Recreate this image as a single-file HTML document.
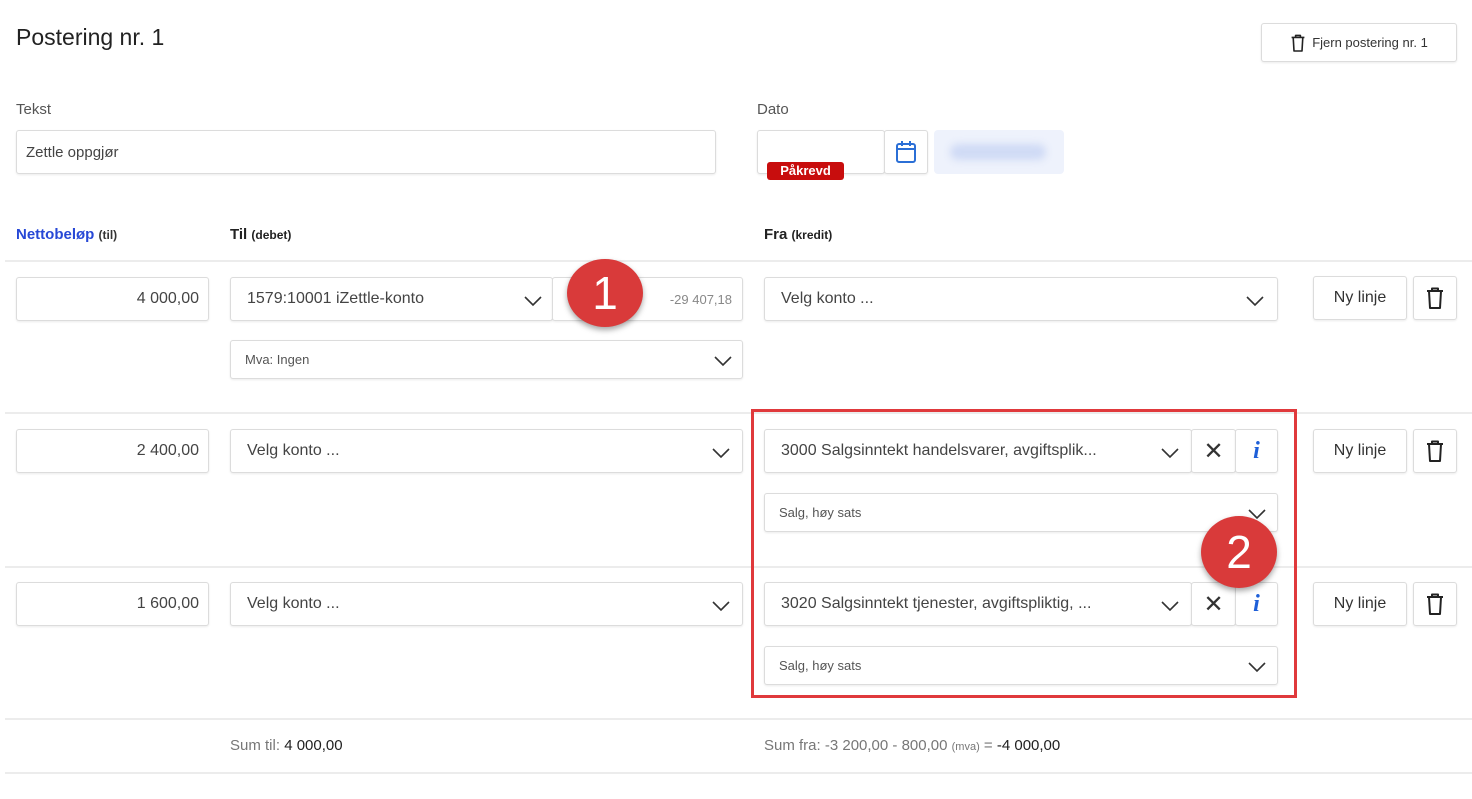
<!DOCTYPE html>
<html><head><meta charset="utf-8"><style>
*{box-sizing:border-box;margin:0;padding:0}
body{width:1472px;height:799px;background:#fff;font-family:"Liberation Sans",sans-serif;color:#333;position:relative;overflow:hidden}
.a{position:absolute}
.box{position:absolute;border:1px solid #dcdcdc;border-radius:3px;background:#fff;box-shadow:0 1px 2px rgba(0,0,0,.08)}
.t{position:absolute;white-space:nowrap}
.line{position:absolute;left:5px;right:0;height:2px;background:#ececec}
.chev{position:absolute;width:20px;height:12px}
.sel{font-size:16px;color:#444;display:flex;align-items:center;padding-left:16px}
.sm{font-size:13px;color:#555;display:flex;align-items:center;padding-left:14px}
.btn{font-size:16px;color:#333;display:flex;align-items:center;justify-content:center}
.amt{font-size:16px;color:#444;display:flex;align-items:center;justify-content:flex-end;padding-right:9px}
.badge{position:absolute;border-radius:50%;background:#d93a3a;color:#fff;font-size:46px;display:flex;align-items:center;justify-content:center;box-shadow:0 3px 6px rgba(0,0,0,.35)}
</style></head><body>
<svg width="0" height="0" style="position:absolute"><defs>
<symbol id="ch" viewBox="0 0 20 12"><path d="M2 2 L10 10 L18 2" fill="none" stroke="#333" stroke-width="1.6"/></symbol>
<symbol id="tr" viewBox="0 0 20 24"><path d="M2 5 H18 M7 5 V2.5 H13 V5 M4 5 L5 22 H15 L16 5" fill="none" stroke="#222" stroke-width="2" stroke-linejoin="round"/></symbol>
</defs></svg>

<div class="t" style="left:16px;top:24px;font-size:23px;color:#222">Postering nr. 1</div>
<div class="box btn" style="left:1261px;top:23px;width:196px;height:39px;font-size:13px">
<svg width="16" height="20" style="margin-right:6px"><use href="#tr"/></svg>Fjern postering nr. 1</div>

<div class="t" style="left:16px;top:101px;font-size:15px;color:#555">Tekst</div>
<div class="box sel" style="left:16px;top:130px;width:700px;height:44px;padding-left:9px;font-size:15px">Zettle oppgjør</div>

<div class="t" style="left:757px;top:101px;font-size:15px;color:#555">Dato</div>
<div class="box" style="left:757px;top:130px;width:128px;height:44px"></div>
<div class="box" style="left:884px;top:130px;width:44px;height:44px;display:flex;align-items:center;justify-content:center">
<svg width="22" height="24" viewBox="0 0 22 24"><rect x="2" y="4" width="18" height="18" rx="2" fill="none" stroke="#2b6fd6" stroke-width="2"/><path d="M2 9 H20 M7 1 V6 M15 1 V6" stroke="#2b6fd6" stroke-width="2"/></svg></div>
<div class="a" style="left:934px;top:130px;width:130px;height:44px;background:#eef2fc;border-radius:4px"><div class="a" style="left:16px;top:14px;width:96px;height:16px;background:#cfdaf5;border-radius:8px;filter:blur(4px)"></div></div>
<div class="a" style="left:767px;top:162px;width:77px;height:18px;background:#c80d0d;border-radius:3px;color:#fff;font-size:13px;font-weight:bold;text-align:center;line-height:18px">Påkrevd</div>

<div class="t" style="left:16px;top:226px;font-size:15px;color:#2748d6;font-weight:bold">Nettobeløp <span style="font-size:12px;color:#333">(til)</span></div>
<div class="t" style="left:230px;top:226px;font-size:15px;color:#222;font-weight:bold">Til <span style="font-size:12px">(debet)</span></div>
<div class="t" style="left:764px;top:226px;font-size:15px;color:#222;font-weight:bold">Fra <span style="font-size:12px">(kredit)</span></div>

<div class="line" style="top:260px"></div>
<!-- row 1 -->
<div class="box amt" style="left:16px;top:277px;width:193px;height:44px">4 000,00</div>
<div class="box sel" style="left:230px;top:277px;width:323px;height:44px">1579:10001 iZettle-konto<svg class="chev" style="left:292px;top:17px"><use href="#ch"/></svg></div>
<div class="box" style="left:552px;top:277px;width:191px;height:44px;font-size:13px;color:#888;text-align:right;padding:14px 10px 0 0">-29 407,18</div>
<div class="box sel" style="left:764px;top:277px;width:514px;height:44px">Velg konto ...<svg class="chev" style="left:480px;top:17px"><use href="#ch"/></svg></div>
<div class="box btn" style="left:1313px;top:276px;width:94px;height:44px">Ny linje</div>
<div class="box btn" style="left:1413px;top:276px;width:44px;height:44px"><svg width="20" height="24"><use href="#tr"/></svg></div>
<div class="box sm" style="left:230px;top:340px;width:513px;height:39px">Mva: Ingen<svg class="chev" style="left:482px;top:14px"><use href="#ch"/></svg></div>

<div class="line" style="top:412px"></div>
<!-- row 2 -->
<div class="box amt" style="left:16px;top:429px;width:193px;height:44px">2 400,00</div>
<div class="box sel" style="left:230px;top:429px;width:513px;height:44px">Velg konto ...<svg class="chev" style="left:480px;top:17px"><use href="#ch"/></svg></div>
<div class="box sel" style="left:764px;top:429px;width:428px;height:44px">3000 Salgsinntekt handelsvarer, avgiftsplik...<svg class="chev" style="left:395px;top:17px"><use href="#ch"/></svg></div>
<div class="box btn" style="left:1191px;top:429px;width:45px;height:44px;font-size:24px">✕</div>
<div class="box btn" style="left:1235px;top:429px;width:43px;height:44px;font-size:24px;color:#1e5fd8;font-style:italic;font-family:'Liberation Serif',serif;font-weight:bold">i</div>
<div class="box btn" style="left:1313px;top:429px;width:94px;height:44px">Ny linje</div>
<div class="box btn" style="left:1413px;top:429px;width:44px;height:44px"><svg width="20" height="24"><use href="#tr"/></svg></div>
<div class="box sm" style="left:764px;top:493px;width:514px;height:39px">Salg, høy sats<svg class="chev" style="left:482px;top:14px"><use href="#ch"/></svg></div>

<div class="line" style="top:566px"></div>
<!-- row 3 -->
<div class="box amt" style="left:16px;top:582px;width:193px;height:44px">1 600,00</div>
<div class="box sel" style="left:230px;top:582px;width:513px;height:44px">Velg konto ...<svg class="chev" style="left:480px;top:17px"><use href="#ch"/></svg></div>
<div class="box sel" style="left:764px;top:582px;width:428px;height:44px">3020 Salgsinntekt tjenester, avgiftspliktig, ...<svg class="chev" style="left:395px;top:17px"><use href="#ch"/></svg></div>
<div class="box btn" style="left:1191px;top:582px;width:45px;height:44px;font-size:24px">✕</div>
<div class="box btn" style="left:1235px;top:582px;width:43px;height:44px;font-size:24px;color:#1e5fd8;font-style:italic;font-family:'Liberation Serif',serif;font-weight:bold">i</div>
<div class="box btn" style="left:1313px;top:582px;width:94px;height:44px">Ny linje</div>
<div class="box btn" style="left:1413px;top:582px;width:44px;height:44px"><svg width="20" height="24"><use href="#tr"/></svg></div>
<div class="box sm" style="left:764px;top:646px;width:514px;height:39px">Salg, høy sats<svg class="chev" style="left:482px;top:14px"><use href="#ch"/></svg></div>

<div class="a" style="left:751px;top:409px;width:546px;height:289px;border:3px solid #e0393c"></div>

<div class="line" style="top:718px"></div>
<div class="t" style="left:230px;top:737px;font-size:15px;color:#777">Sum til: <b style="color:#222;font-weight:normal">4 000,00</b></div>
<div class="t" style="left:764px;top:737px;font-size:15px;color:#777">Sum fra: -3 200,00 - 800,00 <span style="font-size:11px">(mva)</span> = <span style="color:#222">-4 000,00</span></div>
<div class="line" style="top:772px"></div>

<div class="badge" style="left:567px;top:259px;width:76px;height:68px;border-radius:50%">1</div>
<div class="badge" style="left:1201px;top:516px;width:76px;height:72px">2</div>
</body></html>
